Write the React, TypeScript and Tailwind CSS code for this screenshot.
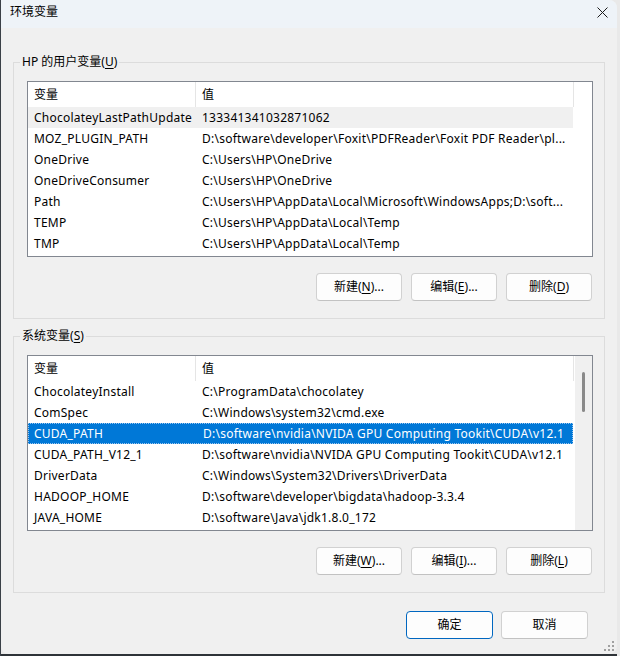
import React from "react";

type Row = [string, string];

const userVars: Row[] = [
  ["ChocolateyLastPathUpdate", "133341341032871062"],
  ["MOZ_PLUGIN_PATH", "D:\\software\\developer\\Foxit\\PDFReader\\Foxit PDF Reader\\pl..."],
  ["OneDrive", "C:\\Users\\HP\\OneDrive"],
  ["OneDriveConsumer", "C:\\Users\\HP\\OneDrive"],
  ["Path", "C:\\Users\\HP\\AppData\\Local\\Microsoft\\WindowsApps;D:\\soft..."],
  ["TEMP", "C:\\Users\\HP\\AppData\\Local\\Temp"],
  ["TMP", "C:\\Users\\HP\\AppData\\Local\\Temp"],
];

const sysVars: Row[] = [
  ["ChocolateyInstall", "C:\\ProgramData\\chocolatey"],
  ["ComSpec", "C:\\Windows\\system32\\cmd.exe"],
  ["CUDA_PATH", "D:\\software\\nvidia\\NVIDA GPU Computing Tookit\\CUDA\\v12.1"],
  ["CUDA_PATH_V12_1", "D:\\software\\nvidia\\NVIDA GPU Computing Tookit\\CUDA\\v12.1"],
  ["DriverData", "C:\\Windows\\System32\\Drivers\\DriverData"],
  ["HADOOP_HOME", "D:\\software\\developer\\bigdata\\hadoop-3.3.4"],
  ["JAVA_HOME", "D:\\software\\Java\\jdk1.8.0_172"],
];

function Btn({
  label,
  mn,
  suffix = "",
  primary = false,
  w = "w-[86px]",
}: {
  label: string;
  mn?: string;
  suffix?: string;
  primary?: boolean;
  w?: string;
}) {
  return (
    <div
      className={
        "h-[28px] rounded-[4px] bg-[#fdfdfd] flex items-center justify-center text-[12px] leading-[16px] text-black border " +
        w +
        " " +
        (primary ? "border-[#0067c0]" : "border-[#d1d1d1] border-b-[#c2c2c2]")
      }
    >
      <span>
        {label}
        {mn ? (
          <>
            (<span className="underline underline-offset-[2px]">{mn}</span>)
          </>
        ) : null}
        {suffix}
      </span>
    </div>
  );
}

function List({
  rows,
  hoverIndex,
  selectedIndex,
  scrollbar,
}: {
  rows: Row[];
  hoverIndex?: number;
  selectedIndex?: number;
  scrollbar?: boolean;
}) {
  return (
    <div className="w-[566px] h-[176px] border border-[#828790] bg-white flex overflow-hidden">
      <div className="w-[546px] flex flex-col">
        <div className="h-[25px] flex text-black">
          <div className="w-[168px] pl-[6px] border-r border-[#e5e5e5] flex items-center">变量</div>
          <div className="flex-1 pl-[6px] border-r border-[#e5e5e5] flex items-center">值</div>
        </div>
        {rows.map(([k, v], i) => {
          const sel = i === selectedIndex;
          const hov = i === hoverIndex;
          return (
            <div
              key={k}
              className={
                "h-[21px] w-[545px] flex whitespace-nowrap overflow-hidden tracking-[0.24px] " +
                (sel
                  ? "bg-[#0078d7] text-white border border-dotted border-[#9cc6ee]"
                  : hov
                  ? "bg-[#f0f0f0] text-black"
                  : "text-black")
              }
            >
              <div className={"w-[168px] flex items-center " + (sel ? "pl-[5px]" : "pl-[6px]")}>{k}</div>
              <div className="flex-1 pl-[6px] flex items-center overflow-hidden">{v}</div>
            </div>
          );
        })}
      </div>
      <div className="w-px" />
      {scrollbar ? (
        <div className="w-[17px] bg-[#f0f0f0] flex flex-col items-center pt-[16px]">
          <div className="w-[3px] h-[40px] rounded-full bg-[#8a8a8a]" />
        </div>
      ) : null}
    </div>
  );
}

function Group({
  title,
  mn,
  children,
  className = "",
}: {
  title: string;
  mn: string;
  children: React.ReactNode;
  className?: string;
}) {
  return (
    <div className={"relative border border-[#dcdcdc] pl-[13px] pr-[11px] " + className}>
      <span className="absolute -top-[9px] left-[6px] px-[2px] bg-[#f0f0f0] leading-[16px] text-black">
        {title}(<span className="underline underline-offset-[2px]">{mn}</span>)
      </span>
      {children}
    </div>
  );
}

export default function App() {
  return (
    <div className="w-[620px] h-[656px] bg-[#e9e9e9] flex font-['Noto_Sans','Noto_Sans_CJK_SC',sans-serif] text-[12px] leading-[16px]">
      <div className="w-px h-full bg-[#3a4047]" />
      <div className="flex flex-col">
        <div className="relative w-[616px] h-[654px] bg-[#f0f0f0] rounded-tr-[8px] rounded-b-[8px] flex flex-col overflow-hidden">
          {/* Title bar */}
          <div className="h-[28px] bg-[#eef3f8] flex justify-between">
            <div className="pl-[9px] pt-[4px] text-black">环境变量</div>
            <div className="w-[30px] flex items-start justify-center pt-[7px]">
              <svg width="11" height="11" viewBox="0 0 11 11">
                <path d="M0.5 0.5 L10.5 10.5 M10.5 0.5 L0.5 10.5" stroke="#1a1a1a" strokeWidth="1" fill="none" />
              </svg>
            </div>
          </div>

          {/* Body */}
          <div className="px-[12px] pt-[34px] flex flex-col">
            <Group title="HP 的用户变量" mn="U" className="pt-[18px] pb-[17px]">
              <List rows={userVars} hoverIndex={0} />
              <div className="mt-[16px] mr-[1px] flex justify-end gap-[9px]">
                <Btn label="新建" mn="N" suffix="..." />
                <Btn label="编辑" mn="E" suffix="..." />
                <Btn label="删除" mn="D" />
              </div>
            </Group>

            <Group title="系统变量" mn="S" className="mt-[17px] pt-[18px] pb-[17px]">
              <List rows={sysVars} selectedIndex={2} scrollbar />
              <div className="mt-[16px] mr-[1px] flex justify-end gap-[9px]">
                <Btn label="新建" mn="W" suffix="..." />
                <Btn label="编辑" mn="I" suffix="..." />
                <Btn label="删除" mn="L" />
              </div>
            </Group>

            <div className="mt-[18px] pr-[17px] flex justify-end gap-[8px]">
              <Btn label="确定" primary w="w-[87px]" />
              <Btn label="取消" w="w-[87px]" />
            </div>
          </div>

          {/* resize grip */}
          <svg className="absolute right-[2px] bottom-[2px]" width="12" height="12" viewBox="0 0 12 12">
            <rect x="9" y="1" width="2" height="2" fill="#a0a0a0" />
            <rect x="9" y="5" width="2" height="2" fill="#a0a0a0" />
            <rect x="5" y="5" width="2" height="2" fill="#a0a0a0" />
            <rect x="9" y="9" width="2" height="2" fill="#a0a0a0" />
            <rect x="5" y="9" width="2" height="2" fill="#a0a0a0" />
            <rect x="1" y="9" width="2" height="2" fill="#a0a0a0" />
          </svg>
        </div>
        <div className="h-[2px] bg-[#2e3338]" />
      </div>
    </div>
  );
}
